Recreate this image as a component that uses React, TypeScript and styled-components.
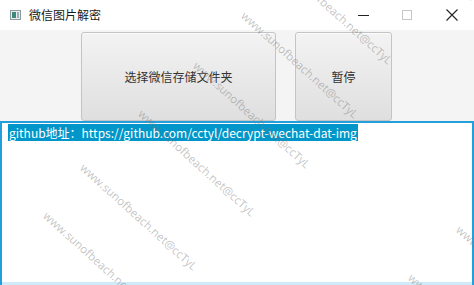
import React from "react";
import styled, { createGlobalStyle } from "styled-components";

const Global = createGlobalStyle`
  html, body { margin: 0; padding: 0; background: #ffffff; }
  body { font-family: "Noto Sans CJK SC", "Noto Sans", sans-serif; }
`;

const Window = styled.div`
  position: relative;
  width: 474px;
  height: 285px;
  overflow: hidden;
  display: flex;
  flex-direction: column;
  background: #f4f4f4;
`;

const TitleBar = styled.div`
  height: 30px;
  flex: none;
  background: #ffffff;
  display: flex;
  align-items: center;
  padding-left: 10px;
`;

const AppIcon = styled.svg`
  width: 11px;
  height: 10px;
  flex: none;
`;

const Title = styled.span`
  margin-left: 8px;
  font-size: 12px;
  color: #1a1a1a;
  line-height: 1;
`;

const Controls = styled.div`
  margin-left: auto;
  display: flex;
  align-items: center;
  height: 100%;
`;

const Ctl = styled.div<{ $w: number }>`
  width: ${(p) => p.$w}px;
  height: 30px;
  display: flex;
  align-items: center;
  justify-content: center;
`;

const Toolbar = styled.div`
  flex: none;
  height: 91px;
  box-sizing: border-box;
  padding: 2px 0 0 81px;
  display: flex;
  gap: 19px;
`;

const Button = styled.div<{ $w: number }>`
  width: ${(p) => p.$w}px;
  height: 89px;
  box-sizing: border-box;
  border: 1px solid #c4c4c4;
  border-radius: 3px;
  background: linear-gradient(#f3f3f3, #dfdfdf);
  box-shadow: inset 0 1px 0 #fbfbfb;
  display: flex;
  align-items: center;
  justify-content: center;
  font-size: 12px;
  color: #333333;
`;

const TextArea = styled.div`
  flex: 1;
  box-sizing: border-box;
  border: 2px solid #23a0dc;
  border-bottom: none;
  background: #ffffff;
  padding: 2px 0 0 6px;
  display: flex;
  flex-direction: column;
`;

const Line = styled.div`
  font-size: 12px;
  line-height: 15px;
`;

const Selected = styled.span`
  background: #0096c9;
  color: #ffffff;
  padding: 0 1px;
`;

const BottomStrip = styled.div`
  margin-top: auto;
  margin-left: -6px;
  height: 3px;
  background: #cfeaf8;
`;

const Watermarks = styled.div`
  position: absolute;
  inset: 0;
  pointer-events: none;
`;

const Mark = styled.span`
  position: absolute;
  transform-origin: 0 50%;
  transform: rotate(42deg);
  font-family: "Open Sans", sans-serif;
  font-size: 11.5px;
  line-height: 12px;
  white-space: nowrap;
  color: rgba(120, 120, 120, 0.45);
`;

const marks: [number, number][] = [
  [-110, -150],
  [140, 106],
  [195, 58],
  [243, 8],
  [277, -46],
  [45, 208],
  [82, 160],
  [-30, 262],
  [410, 270],
  [458, 222],
  [360, -110],
];

export default function App() {
  return (
    <>
      <Global />
      <Window>
        <TitleBar>
          <AppIcon viewBox="0 0 11 10">
            <rect x="0.5" y="0.5" width="10" height="9" fill="#e8eef0" stroke="#8a9aa0" />
            <rect x="2" y="2" width="4" height="6" fill="#3a8a78" />
            <rect x="7" y="2" width="2" height="6" fill="#9ab0b8" />
          </AppIcon>
          <Title>微信图片解密</Title>
          <Controls>
            <Ctl $w={44}>
              <svg width="11" height="11" viewBox="0 0 11 11">
                <line x1="0" y1="5.5" x2="11" y2="5.5" stroke="#222" strokeWidth="1" />
              </svg>
            </Ctl>
            <Ctl $w={44}>
              <svg width="10" height="10" viewBox="0 0 10 10">
                <rect x="0.5" y="0.5" width="9" height="9" fill="none" stroke="#c6c6c6" strokeWidth="1" />
              </svg>
            </Ctl>
            <Ctl $w={45}>
              <svg width="12" height="12" viewBox="0 0 12 12">
                <path d="M0.5 0.5 L11.5 11.5 M11.5 0.5 L0.5 11.5" stroke="#222" strokeWidth="1.1" />
              </svg>
            </Ctl>
          </Controls>
        </TitleBar>
        <Toolbar>
          <Button $w={195}>选择微信存储文件夹</Button>
          <Button $w={97}>暂停</Button>
        </Toolbar>
        <TextArea>
          <Line>
            <Selected>github地址：https://github.com/cctyl/decrypt-wechat-dat-img</Selected>
          </Line>
          <BottomStrip />
        </TextArea>
        <Watermarks>
          {marks.map(([x, y], i) => (
            <Mark key={i} style={{ left: x, top: y }}>
              www.sunofbeach.net@ccTyL
            </Mark>
          ))}
        </Watermarks>
      </Window>
    </>
  );
}
